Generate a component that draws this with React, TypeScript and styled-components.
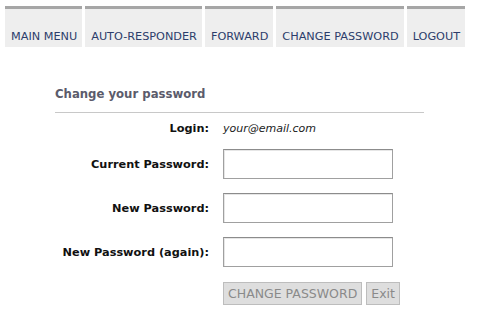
import styled, { createGlobalStyle } from "styled-components";

const GlobalStyle = createGlobalStyle`
  body {
    margin: 0;
    background: #ffffff;
    font-family: "DejaVu Sans", Verdana, sans-serif;
  }
`;

const Page = styled.div`
  width: 480px;
  height: 315px;
  overflow: hidden;
`;

const Nav = styled.nav`
  display: flex;
  gap: 3px;
  padding: 6px 0 0 5px;
`;

const Tab = styled.a`
  display: flex;
  align-items: flex-end;
  height: 34px;
  box-sizing: content-box;
  padding: 0 5px 4px 6px;
  background: #eeeeee;
  border-top: 3px solid #a6a6a6;
  color: #2c3d6b;
  font-size: 11.25px;
  line-height: 13px;
  text-decoration: none;
  white-space: nowrap;
  cursor: pointer;
`;

const Panel = styled.section`
  width: 369px;
  margin: 40px 0 0 55px;
`;

const Heading = styled.h2`
  margin: 0;
  padding-bottom: 10px;
  border-bottom: 1px solid #c8c8c8;
  color: #5b5b6b;
  font-size: 11.7px;
  line-height: 15px;
  font-weight: bold;
`;

const Form = styled.form`
  display: grid;
  grid-template-columns: 154px 1fr;
  column-gap: 14px;
  row-gap: 14px;
  align-items: center;
  margin-top: 9px;
`;

const Label = styled.label`
  text-align: right;
  color: #111111;
  font-size: 11.3px;
  font-weight: bold;
  white-space: nowrap;
`;

const Value = styled.span`
  color: #222222;
  font-size: 11px;
  font-style: italic;
`;

const Field = styled.input`
  width: 170px;
  height: 30px;
  box-sizing: border-box;
  margin: 0;
  border: 1px solid #a0a0a0;
  border-top-color: #8c8c8c;
  box-shadow: inset 1px 1px 0 #e6e6e6;
  background: #ffffff;
  font-family: inherit;
  font-size: 11px;
`;

const Actions = styled.div`
  grid-column: 2;
  display: flex;
  gap: 4px;
  margin-top: 1px;
`;

const Button = styled.button`
  height: 23px;
  padding: 0 4px;
  margin: 0;
  border: 1px solid #bdbdbd;
  background: #dedede;
  color: #8a8a8a;
  font-family: inherit;
  font-size: 12.5px;
  cursor: default;
`;

const tabs = ["MAIN MENU", "AUTO-RESPONDER", "FORWARD", "CHANGE PASSWORD", "LOGOUT"];

export default function App() {
  return (
    <Page>
      <GlobalStyle />
      <Nav>
        {tabs.map((t) => (
          <Tab key={t}>{t}</Tab>
        ))}
      </Nav>
      <Panel>
        <Heading>Change your password</Heading>
        <Form onSubmit={(e) => e.preventDefault()}>
          <Label>Login:</Label>
          <Value>your@email.com</Value>
          <Label htmlFor="cur">Current Password:</Label>
          <Field id="cur" type="password" />
          <Label htmlFor="new1">New Password:</Label>
          <Field id="new1" type="password" />
          <Label htmlFor="new2">New Password (again):</Label>
          <Field id="new2" type="password" />
          <Actions>
            <Button type="submit" disabled>CHANGE PASSWORD</Button>
            <Button type="button" disabled>Exit</Button>
          </Actions>
        </Form>
      </Panel>
    </Page>
  );
}
